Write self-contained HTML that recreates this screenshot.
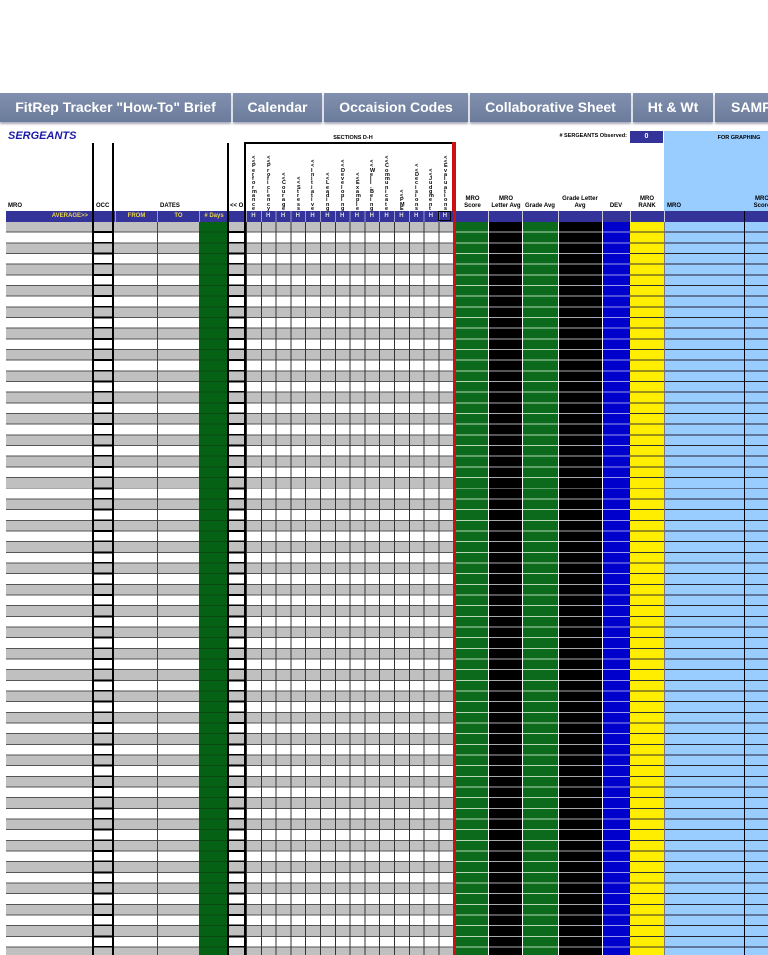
<!DOCTYPE html>
<html><head><meta charset="utf-8"><style>
*{margin:0;padding:0;box-sizing:border-box}
body{width:768px;height:955px;overflow:hidden;background:#fff;position:relative;font-family:"Liberation Sans",Arial,sans-serif}
.a{position:absolute}
.tab{position:absolute;top:93px;height:29px;background:linear-gradient(#8190ae,#6b7b9b);color:#fff;font-weight:bold;font-size:14px;line-height:29px;text-align:center;white-space:nowrap;overflow:hidden;box-shadow:0 2px 2px #aab}
.rows{background:repeating-linear-gradient(#c0c0c0 0 9.67px,#555 9.67px 10.67px,#fff 10.67px 20.34px,#555 20.34px 21.34px)}
.rowsb{background:repeating-linear-gradient(#c0c0c0 0 9.17px,#000 9.17px 11.17px,#fff 11.17px 19.84px,#000 19.84px 21.34px)}
.vl{position:absolute;background:#000}
.lbl{position:absolute;font-size:6px;font-weight:bold;color:#000;text-align:center;line-height:7px}
.band{position:absolute;top:211px;height:11px;background:#333399;font-size:6px;font-weight:bold;line-height:11px;text-align:center;color:#e8d44a}
.vt{position:absolute;bottom:744px;width:0;margin-left:6px;word-break:break-all;font-size:5.5px;font-weight:bold;line-height:4.25px;max-height:66px;overflow:visible}
</style></head><body>
<div class="tab" style="left:0;width:231px">FitRep Tracker "How-To" Brief</div>
<div class="tab" style="left:233px;width:89px">Calendar</div>
<div class="tab" style="left:324px;width:144px">Occaision Codes</div>
<div class="tab" style="left:470px;width:161px">Collaborative Sheet</div>
<div class="tab" style="left:633px;width:80px">Ht &amp; Wt</div>
<div class="tab" style="left:715px;width:60px;text-align:left;padding-left:16px">SAMPLE</div>

<div class="a" style="left:8px;top:130px;font-size:11px;font-weight:bold;font-style:italic;color:#1a1aa8">SERGEANTS</div>
<div class="a" style="left:320px;top:135px;width:66px;font-size:5.5px;font-weight:bold;text-align:center">SECTIONS D-H</div>
<div class="a" style="left:500px;top:133px;width:127px;font-size:5.5px;font-weight:bold;text-align:right">#&nbsp;SERGEANTS Observed:</div>
<div class="a" style="left:630px;top:131px;width:33px;height:12px;background:#333399;color:#fff;font-size:7px;font-weight:bold;text-align:center;line-height:12px">0</div>
<div class="a" style="left:664px;top:131px;width:104px;height:80px;background:#99ccff"></div>
<div class="a" style="left:664px;top:135px;width:150px;font-size:5.5px;font-weight:bold;text-align:center">FOR GRAPHING</div>

<div class="vl" style="left:245px;top:142px;width:208px;height:2px"></div>
<div class="a" style="left:452px;top:142px;width:4px;height:813px;background:#d01010"></div>

<div class="vt" style="left:246px">&lt;&lt;Performance</div>
<div class="vt" style="left:261px">&lt;&lt;Proficiency</div>
<div class="vt" style="left:276px">&lt;&lt;Courage</div>
<div class="vt" style="left:291px">&lt;&lt;Stress</div>
<div class="vt" style="left:305px">&lt;&lt;Initiative</div>
<div class="vt" style="left:320px">&lt;&lt;Leading</div>
<div class="vt" style="left:335px">&lt;&lt;Developing</div>
<div class="vt" style="left:350px">&lt;&lt;Example</div>
<div class="vt" style="left:364px">&lt;&lt;Well-Being</div>
<div class="vt" style="left:379px">&lt;&lt;Communicate</div>
<div class="vt" style="left:394px">&lt;&lt;PME</div>
<div class="vt" style="left:409px">&lt;&lt;Decisions</div>
<div class="vt" style="left:423px">&lt;&lt;Judgment</div>
<div class="vt" style="left:438px">&lt;&lt;Evaluations</div>

<div class="lbl" style="left:8px;top:203px">MRO</div>
<div class="lbl" style="left:96px;top:203px">OCC</div>
<div class="lbl" style="left:160px;top:203px">DATES</div>
<div class="lbl" style="left:230px;top:203px">&lt;&lt; O</div>
<div class="lbl" style="left:457px;top:196px;width:31px">MRO<br>Score</div>
<div class="lbl" style="left:488px;top:196px;width:36px">MRO<br>Letter Avg</div>
<div class="lbl" style="left:522px;top:203px;width:36px">Grade Avg</div>
<div class="lbl" style="left:558px;top:196px;width:44px">Grade Letter<br>Avg</div>
<div class="lbl" style="left:602px;top:203px;width:28px">DEV</div>
<div class="lbl" style="left:630px;top:196px;width:34px">MRO<br>RANK</div>
<div class="lbl" style="left:667px;top:203px">MRO</div>
<div class="lbl" style="left:745px;top:196px;width:34px">MRO<br>Score</div>

<div class="band" style="left:6px;width:447px"></div>
<div class="band" style="left:6px;width:82px;text-align:right">AVERAGE&gt;&gt;</div>
<div class="band" style="left:115px;width:42px;border-left:1px solid #9999cc">FROM</div>
<div class="band" style="left:157px;width:42px;border-left:1px solid #9999cc">TO</div>
<div class="band" style="left:199px;width:29px;border-left:1px solid #9999cc">#&nbsp;Days</div>
<div class="band" style="left:246px;width:207px;color:#ddd;background:repeating-linear-gradient(90deg,#9999cc 0 1px,transparent 1px 14.8px),#333399;text-align:left;letter-spacing:0">
<span style="display:inline-block;width:14.8px;text-align:center">H</span><span style="display:inline-block;width:14.8px;text-align:center">H</span><span style="display:inline-block;width:14.8px;text-align:center">H</span><span style="display:inline-block;width:14.8px;text-align:center">H</span><span style="display:inline-block;width:14.8px;text-align:center">H</span><span style="display:inline-block;width:14.8px;text-align:center">H</span><span style="display:inline-block;width:14.8px;text-align:center">H</span><span style="display:inline-block;width:14.8px;text-align:center">H</span><span style="display:inline-block;width:14.8px;text-align:center">H</span><span style="display:inline-block;width:14.8px;text-align:center">H</span><span style="display:inline-block;width:14.8px;text-align:center">H</span><span style="display:inline-block;width:14.8px;text-align:center">H</span><span style="display:inline-block;width:14.8px;text-align:center">H</span><span style="display:inline-block;width:13px;text-align:center;border:1.5px solid #000;line-height:8px">H</span></div>
<div class="band" style="left:456px;width:312px"></div>
<div class="a" style="left:488px;top:211px;width:1px;height:11px;background:#ccd"></div>
<div class="a" style="left:522px;top:211px;width:1px;height:11px;background:#ccd"></div>
<div class="a" style="left:558px;top:211px;width:1px;height:11px;background:#ccd"></div>
<div class="a" style="left:602px;top:211px;width:1px;height:11px;background:#ccd"></div>
<div class="a" style="left:630px;top:211px;width:1px;height:11px;background:#ccd"></div>
<div class="a" style="left:664px;top:211px;width:1px;height:11px;background:#ccd"></div>
<div class="a" style="left:744px;top:211px;width:1px;height:11px;background:#ccd"></div>

<div class="a rows" style="left:6px;top:222px;width:87px;height:733px"></div>
<div class="a rowsb" style="left:94px;top:222px;width:19px;height:733px"></div>
<div class="a rows" style="left:114px;top:222px;width:85px;height:733px"></div>
<div class="a" style="left:157px;top:222px;width:1px;height:733px;background:#444"></div>
<div class="a" style="left:199px;top:222px;width:29px;height:733px;background:repeating-linear-gradient(#056114 0 9.67px,#0a4a12 9.67px 10.67px)"></div>
<div class="a rowsb" style="left:229px;top:222px;width:16px;height:733px"></div>
<div class="a" style="left:246px;top:222px;width:207px;height:733px;background:repeating-linear-gradient(90deg,#333 0 1px,transparent 1px 14.8px),repeating-linear-gradient(#c0c0c0 0 9.67px,#555 9.67px 10.67px,#fff 10.67px 20.34px,#555 20.34px 21.34px)"></div>

<div class="a" style="left:456px;top:222px;width:32px;height:733px;background:repeating-linear-gradient(#0b6a1c 0 9.67px,#b8d8b8 9.67px 10.67px)"></div>
<div class="a" style="left:489px;top:222px;width:33px;height:733px;background:repeating-linear-gradient(#000 0 9.67px,#aaa 9.67px 10.67px)"></div>
<div class="a" style="left:523px;top:222px;width:35px;height:733px;background:repeating-linear-gradient(#0b6a1c 0 9.67px,#b8d8b8 9.67px 10.67px)"></div>
<div class="a" style="left:559px;top:222px;width:43px;height:733px;background:repeating-linear-gradient(#000 0 9.67px,#aaa 9.67px 10.67px)"></div>
<div class="a" style="left:603px;top:222px;width:27px;height:733px;background:repeating-linear-gradient(#0000cc 0 9.67px,#9999ee 9.67px 10.67px)"></div>
<div class="a" style="left:630px;top:222px;width:34px;height:733px;background:repeating-linear-gradient(#ffee00 0 9.67px,#333 9.67px 10.67px)"></div>
<div class="a" style="left:664px;top:222px;width:104px;height:733px;background:repeating-linear-gradient(#99ccff 0 9.67px,#223 9.67px 10.67px)"></div>
<div class="a" style="left:664px;top:222px;width:1px;height:733px;background:#778"></div>
<div class="a" style="left:744px;top:211px;width:1px;height:744px;background:#001"></div>

<div class="vl" style="left:92px;top:143px;width:2px;height:812px"></div>
<div class="vl" style="left:112px;top:143px;width:2px;height:812px"></div>
<div class="vl" style="left:227px;top:143px;width:2px;height:812px"></div>
<div class="vl" style="left:244px;top:142px;width:2px;height:813px"></div>
</body></html>
